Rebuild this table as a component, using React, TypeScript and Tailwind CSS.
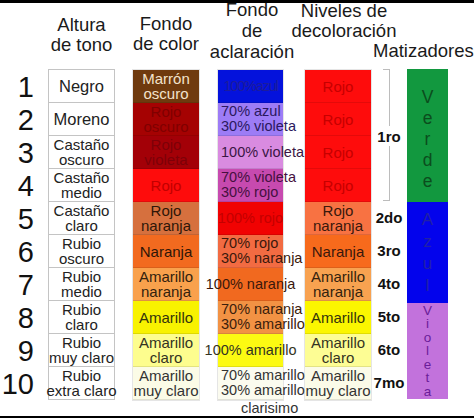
import React from "react";

type Cell = { bg: string; fg: string; lines: string[]; align?: "left" | "center"; tight?: boolean };

const col1: string[][] = [
  ["Negro"],
  ["Moreno"],
  ["Castaño", "oscuro"],
  ["Castaño", "medio"],
  ["Castaño", "claro"],
  ["Rubio", "oscuro"],
  ["Rubio", "medio"],
  ["Rubio", "claro"],
  ["Rubio", "muy claro"],
  ["Rubio", "extra claro"],
];

const col2: Cell[] = [
  { bg: "#6f3a0e", fg: "#f3e3cc", lines: ["Marrón", "oscuro"] },
  { bg: "#a50202", fg: "#7f0000", lines: ["Rojo", "oscuro"] },
  { bg: "#a30007", fg: "#7d0008", lines: ["Rojo", "violeta"] },
  { bg: "#fe0c0c", fg: "#c20000", lines: ["Rojo"] },
  { bg: "#d6703e", fg: "#2e1608", lines: ["Rojo", "naranja"] },
  { bg: "#f26a1f", fg: "#2e1608", lines: ["Naranja"] },
  { bg: "#f9a14c", fg: "#33220e", lines: ["Amarillo", "naranja"] },
  { bg: "#f8f200", fg: "#34340c", lines: ["Amarillo"] },
  { bg: "#fdfd8e", fg: "#333322", lines: ["Amarillo", "claro"] },
  { bg: "#fbfbe6", fg: "#333333", lines: ["Amarillo", "muy claro"] },
];

const col3: Cell[] = [
  { bg: "#0412dc", fg: "#1c1c9c", lines: ["100%azul"], align: "center", tight: true },
  { bg: "#9d7cf6", fg: "#2a185e", lines: ["70% azul", "30% violeta"], align: "left" },
  { bg: "#d98be0", fg: "#3a1644", lines: ["100% violeta"], align: "left" },
  { bg: "#c74aaf", fg: "#451040", lines: ["70% violeta", "30% rojo"], align: "left" },
  { bg: "#f10202", fg: "#c40000", lines: ["100% rojo"], align: "center" },
  { bg: "#f26b42", fg: "#3a180c", lines: ["70% rojo", "30% naranja"], align: "left" },
  { bg: "#f1691f", fg: "#3a180c", lines: ["100% naranja"], align: "center" },
  { bg: "#f29244", fg: "#3a200c", lines: ["70% naranja", "30% amarillo"], align: "left" },
  { bg: "#fcfa12", fg: "#333322", lines: ["100% amarillo"], align: "center" },
  { bg: "#fbfbef", fg: "#333333", lines: ["70% amarillo", "30% amarillo"], align: "left" },
];

const col4: Cell[] = [
  { bg: "#fe0c0c", fg: "#c60000", lines: ["Rojo"] },
  { bg: "#fe0c0c", fg: "#c60000", lines: ["Rojo"] },
  { bg: "#fe0c0c", fg: "#c60000", lines: ["Rojo"] },
  { bg: "#fe0c0c", fg: "#c60000", lines: ["Rojo"] },
  { bg: "#f87242", fg: "#3a180c", lines: ["Rojo", "naranja"] },
  { bg: "#f76a1c", fg: "#3a180c", lines: ["Naranja"] },
  { bg: "#f8a250", fg: "#33220e", lines: ["Amarillo", "naranja"] },
  { bg: "#fbf600", fg: "#34340c", lines: ["Amarillo"] },
  { bg: "#fdfd94", fg: "#333322", lines: ["Amarillo", "claro"] },
  { bg: "#fbfbe8", fg: "#333333", lines: ["Amarillo", "muy claro"] },
];

const levels = ["2do", "3ro", "4to", "5to", "6to", "7mo"];

function ColorCell({ c, size }: { c: Cell; size: string }) {
  const justify = c.align === "left" ? "justify-start pl-[3px]" : "justify-center";
  return (
    <div
      className={`h-[33px] flex items-center ${justify} border-b border-black/10`}
      style={{ backgroundColor: c.bg, color: c.fg }}
    >
      <div className={`whitespace-nowrap leading-[15px] ${size} ${c.align === "left" ? "text-left" : "text-center"} ${c.tight ? "tracking-[-1.2px]" : ""}`}>
        {c.lines.map((l, i) => (
          <div key={i}>{l}</div>
        ))}
      </div>
    </div>
  );
}

function Vertical({ letters, cls }: { letters: string[]; cls: string }) {
  return (
    <div className={`flex flex-col items-center ${cls}`}>
      {letters.map((l, i) => (
        <div key={i}>{l}</div>
      ))}
    </div>
  );
}

export default function App() {
  return (
    <div className="w-[474px] h-[418px] bg-white flex flex-col overflow-hidden font-['Liberation_Sans',Arial,sans-serif] text-[#222]">
      <div className="h-[3px] bg-black shrink-0" />
      {/* Header */}
      <div className="h-[66px] flex shrink-0 text-[18.5px] text-[#1a1a1a]">
        <div className="w-[48px]" />
        <div className="w-[67px] flex justify-center pt-[12px] leading-[20px] text-center whitespace-nowrap">
          <div>
            <div>Altura</div>
            <div>de tono</div>
          </div>
        </div>
        <div className="w-[68px] ml-[17px] flex justify-center pt-[11px] leading-[20px] text-center whitespace-nowrap">
          <div>
            <div>Fondo</div>
            <div>de color</div>
          </div>
        </div>
        <div className="w-[67px] ml-[17px] flex justify-center -mt-[4px] leading-[21px] text-center whitespace-nowrap">
          <div className="pl-[3px]">
            <div>Fondo</div>
            <div>de</div>
            <div>aclaración</div>
          </div>
        </div>
        <div className="w-[68px] ml-[20px] flex justify-center -mt-[2px] leading-[20px] text-center whitespace-nowrap">
          <div className="pl-[12px]">
            <div>Niveles de</div>
            <div>decoloración</div>
          </div>
        </div>
        <div className="flex-1 pl-[1px] pt-[38px] leading-[20px] whitespace-nowrap">Matizadores</div>
      </div>

      {/* Body */}
      <div className="flex items-start shrink-0">
        {/* numbers */}
        <div className="w-[48px] flex flex-col">
          {Array.from({ length: 10 }, (_, i) => (
            <div key={i} className="h-[33px] flex items-center justify-end pr-[14px] pt-[4px] text-[29px] leading-none text-[#111]">
              {i + 1}
            </div>
          ))}
        </div>

        {/* Altura de tono */}
        <div className="w-[67px] flex flex-col border-t border-x border-[#c4c4c4]">
          {col1.map((lines, i) => (
            <div
              key={i}
              className={`h-[33px] flex items-center justify-center border-b border-[#c4c4c4] text-center whitespace-nowrap ${lines.length === 1 ? "text-[16.5px]" : "text-[15px] leading-[15.5px]"}`}
            >
              <div>
                {lines.map((l, j) => (
                  <div key={j}>{l}</div>
                ))}
              </div>
            </div>
          ))}
        </div>

        {/* Fondo de color */}
        <div className="w-[68px] ml-[17px] flex flex-col border border-black/10">
          {col2.map((c, i) => (
            <ColorCell key={i} c={c} size="text-[15px]" />
          ))}
        </div>

        {/* Fondo de aclaración */}
        <div className="w-[67px] ml-[17px] flex flex-col">
          <div className="flex flex-col border border-black/10">
            {col3.map((c, i) => (
              <ColorCell key={i} c={c} size="text-[14.5px]" />
            ))}
          </div>
          <div className="pl-[24px] text-center text-[14.5px] leading-[15px] text-[#333] whitespace-nowrap">clarisimo</div>
        </div>

        {/* Niveles de decoloración */}
        <div className="w-[68px] ml-[20px] flex flex-col border border-black/10">
          {col4.map((c, i) => (
            <ColorCell key={i} c={c} size="text-[15px]" />
          ))}
        </div>

        {/* level labels */}
        <div className="w-[35px] flex flex-col text-[15px] font-bold text-[#111]">
          <div className="h-[132px] flex flex-col">
            <div className="h-[57px] ml-[11px] w-[7px] border-t border-r border-[#bcbcbc]" />
            <div className="h-[20px] flex items-center justify-center pr-[1px] leading-none">1ro</div>
            <div className="flex-1 ml-[11px] w-[7px] border-b border-r border-[#bcbcbc]" />
          </div>
          {levels.map((l) => (
            <div key={l} className="h-[33px] flex items-center justify-center pr-[1px] leading-none">
              {l}
            </div>
          ))}
        </div>

        {/* Matizadores */}
        <div className="w-[41px] flex flex-col">
          <div className="h-[133px] bg-[#12983f] flex items-center justify-center pt-[8px]">
            <Vertical letters={["V", "e", "r", "d", "e"]} cls="text-[17.5px] leading-[21px] text-[#0b4d1d]" />
          </div>
          <div className="h-[101px] bg-[#0303ec] flex items-center justify-center">
            <Vertical letters={["A", "z", "u", "l"]} cls="text-[17px] leading-[22px] text-[#2020a8]" />
          </div>
          <div className="h-[96px] bg-[#c272dc] flex items-center justify-center">
            <Vertical letters={["V", "i", "o", "l", "e", "t", "a"]} cls="text-[13.5px] leading-[13.4px] text-[#6b1d9a]" />
          </div>
        </div>
      </div>

      <div className="mt-auto h-[5px] bg-black shrink-0" />
    </div>
  );
}
